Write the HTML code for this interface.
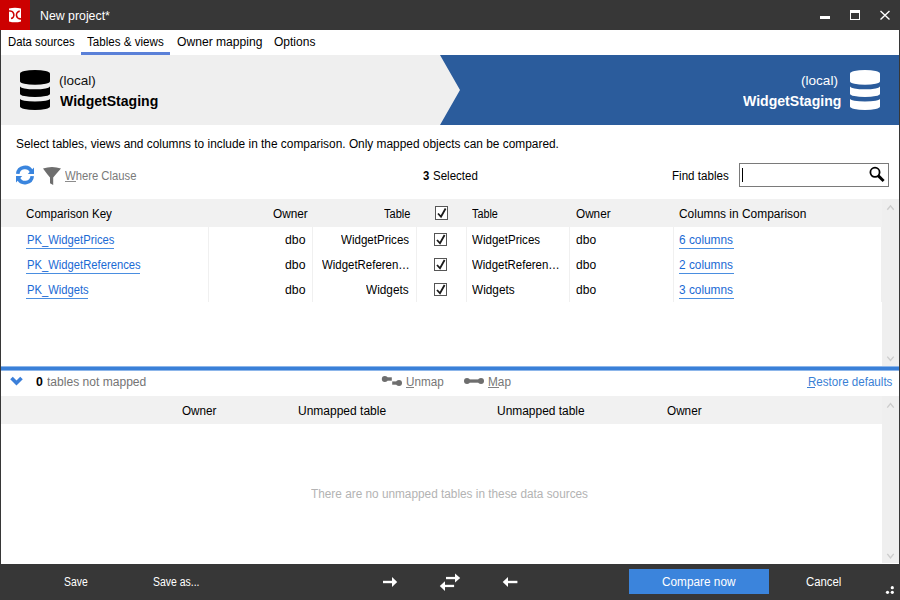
<!DOCTYPE html>
<html><head><meta charset="utf-8"><title>New project*</title>
<style>
html,body{margin:0;padding:0;}
body{width:900px;height:600px;overflow:hidden;position:relative;background:#fff;font-family:"Liberation Sans",sans-serif;}
.a{position:absolute;}
.t{position:absolute;white-space:nowrap;transform-origin:0 0;font-family:"Liberation Sans",sans-serif;}
svg{position:absolute;left:0;top:0;}
</style></head>
<body>
<!-- title bar -->
<div class="a" style="left:0;top:0;width:900px;height:30px;background:#373737"></div>
<div class="a" style="left:0;top:0;width:30px;height:30px;background:#cc0000"></div>
<!-- window borders -->
<div class="a" style="left:0;top:30px;width:1px;height:534px;background:#373737"></div>
<div class="a" style="left:899px;top:30px;width:1px;height:534px;background:#373737"></div>
<!-- tab underline -->
<div class="a" style="left:81px;top:52px;width:89px;height:3px;background:#5a80d8"></div>
<!-- banner -->
<div class="a" style="left:1px;top:55px;width:898px;height:70px;background:#efefef"></div>
<!-- grid header -->
<div class="a" style="left:1px;top:199px;width:898px;height:28px;background:#f1f1f1"></div>
<div class="a" style="left:882px;top:199px;width:17px;height:28px;background:#efefef"></div>
<div class="a" style="left:881px;top:227px;width:18px;height:75px;background:#efefef"></div>
<div class="a" style="left:882px;top:302px;width:17px;height:64px;background:#efefef"></div>
<!-- column separators -->
<div class="a" style="left:208px;top:227px;width:1px;height:75px;background:#f0f0f0"></div>
<div class="a" style="left:312px;top:227px;width:1px;height:75px;background:#f0f0f0"></div>
<div class="a" style="left:416px;top:227px;width:1px;height:75px;background:#f0f0f0"></div>
<div class="a" style="left:466px;top:227px;width:1px;height:75px;background:#f0f0f0"></div>
<div class="a" style="left:569px;top:227px;width:1px;height:75px;background:#f0f0f0"></div>
<div class="a" style="left:673px;top:227px;width:1px;height:75px;background:#f0f0f0"></div>
<!-- link underlines -->
<div class="a" style="left:26px;top:248px;width:88px;height:1px;background:#4a8ee0"></div>
<div class="a" style="left:26px;top:273px;width:114px;height:1px;background:#4a8ee0"></div>
<div class="a" style="left:26px;top:298px;width:62px;height:1px;background:#4a8ee0"></div>
<div class="a" style="left:679px;top:248px;width:55px;height:1px;background:#4a8ee0"></div>
<div class="a" style="left:679px;top:273px;width:55px;height:1px;background:#4a8ee0"></div>
<div class="a" style="left:679px;top:298px;width:55px;height:1px;background:#4a8ee0"></div>
<!-- blue divider -->
<div class="a" style="left:1px;top:366px;width:898px;height:5px;background:linear-gradient(#8db6ea 0 1px,#3a80d8 1px 4px,#8db6ea 4px 5px)"></div>
<!-- bottom grid header -->
<div class="a" style="left:1px;top:396px;width:898px;height:28px;background:#f1f1f1"></div>
<div class="a" style="left:882px;top:396px;width:17px;height:167px;background:#efefef"></div>
<!-- underlines of mnemonic -->
<div class="a" style="left:65px;top:181px;width:11px;height:1px;background:#8c8c8c"></div>
<div class="a" style="left:406px;top:387px;width:8px;height:1px;background:#808080"></div>
<div class="a" style="left:488px;top:387px;width:11px;height:1px;background:#808080"></div>
<div class="a" style="left:807px;top:387px;width:8px;height:1px;background:#3a7fd5"></div>
<!-- search box -->
<div class="a" style="left:739px;top:163px;width:148px;height:22px;border:1px solid #7a7a7a;background:#fff"></div>
<div class="a" style="left:742px;top:168px;width:1px;height:14px;background:#000"></div>
<!-- bottom bar -->
<div class="a" style="left:0;top:564px;width:900px;height:36px;background:#373737"></div>
<div class="a" style="left:629px;top:569px;width:140px;height:25px;background:#3b84dc"></div>

<svg width="900" height="600" viewBox="0 0 900 600">
  <!-- logo -->
  <path d="M9 8.5 Q15 6.8 21 8.5 L21 21.5 Q15 23.2 9 21.5 Z" fill="#fff"/>
  <path d="M9 11.1 A3.8 3.8 0 0 1 11 18.6" fill="none" stroke="#cc0000" stroke-width="1.6"/>
  <path d="M19.7 11.1 A3.8 3.8 0 0 0 21 18.8" fill="none" stroke="#cc0000" stroke-width="1.6"/>
  <!-- window controls -->
  <rect x="820" y="16" width="10" height="3" fill="#fff"/>
  <rect x="850.5" y="10.5" width="9" height="9" fill="none" stroke="#fff" stroke-width="1"/>
  <rect x="850" y="10" width="10" height="3" fill="#fff"/>
  <path d="M880.5 11 L889.5 19.5 M889.5 11 L880.5 19.5" stroke="#fff" stroke-width="1.4"/>
  <!-- banner arrow -->
  <path d="M440 55 L899 55 L899 125 L440 125 L460 90 Z" fill="#2b5c9c"/>
  <!-- left db icon -->
  <g transform="translate(20,70)" fill="#000">
    <path d="M0 3.5 A15 3.5 0 0 1 30 3.5 L30 11.25 A15 3.6 0 0 1 0 11.25 Z"/>
    <path d="M0 16.3 A15 3 0 0 0 30 16.3 L30 23.7 A15 3.4 0 0 1 0 23.7 Z"/>
    <path d="M0 28.8 A15 2.6 0 0 0 30 28.8 L30 36.6 A15 3.4 0 0 1 0 36.6 Z"/>
  </g>
  <!-- right db icon -->
  <g transform="translate(850,70)" fill="#fff">
    <path d="M0 3.5 A15 3.5 0 0 1 30 3.5 L30 11.25 A15 3.6 0 0 1 0 11.25 Z"/>
    <path d="M0 16.3 A15 3 0 0 0 30 16.3 L30 23.7 A15 3.4 0 0 1 0 23.7 Z"/>
    <path d="M0 28.8 A15 2.6 0 0 0 30 28.8 L30 36.6 A15 3.4 0 0 1 0 36.6 Z"/>
  </g>
  <!-- refresh icon -->
  <g transform="translate(16,166)" fill="#3a85de">
    <path d="M1.75 7.9 A7.25 7.25 0 0 1 15.5 5.5" fill="none" stroke="#3a85de" stroke-width="3.6"/>
    <path d="M18 1.5 L18 7.9 L11.8 7.9 Z"/>
    <path d="M16.25 10.1 A7.25 7.25 0 0 1 2.5 12.5" fill="none" stroke="#3a85de" stroke-width="3.6"/>
    <path d="M0 16.5 L0 10.1 L6.2 10.1 Z"/>
  </g>
  <!-- funnel -->
  <path d="M43 168.5 Q52 165.4 61 168.5 Q56 174 53.2 177.6 L53.2 185 L50 183.2 L50 177.6 Q47 174 43 168.5 Z" fill="#6e6e6e"/>
  <!-- search magnifier -->
  <circle cx="875" cy="172.3" r="4.6" fill="none" stroke="#000" stroke-width="1.8"/>
  <path d="M878.2 175.6 L883.6 181" stroke="#000" stroke-width="2.9"/>
  <!-- checkboxes -->
  <g fill="#fff" stroke="#555" stroke-width="1">
    <rect x="435.5" y="206.5" width="12" height="13"/>
    <rect x="434.5" y="233.5" width="12" height="12"/>
    <rect x="434.5" y="258.5" width="12" height="12"/>
    <rect x="434.5" y="283.5" width="12" height="12"/>
  </g>
  <g fill="none" stroke="#1a1a1a" stroke-width="1.8" stroke-linejoin="miter">
    <path d="M438 213.5 L441 216.8 L445.6 208.5"/>
    <path d="M437 240 L440 243.3 L444.6 235"/>
    <path d="M437 265 L440 268.3 L444.6 260"/>
    <path d="M437 290 L440 293.3 L444.6 285"/>
  </g>
  <!-- scrollbar chevrons -->
  <g fill="none" stroke="#cdcdcd" stroke-width="1.4">
    <path d="M887.3 209.8 L890.5 205.8 L893.7 209.8"/>
    <path d="M887.3 356.6 L890.5 360.4 L893.7 356.6"/>
    <path d="M887.3 407.6 L890.5 403.6 L893.7 407.6"/>
    <path d="M887.3 553.9 L890.5 557.9 L893.7 553.9"/>
  </g>
  <!-- collapse chevron -->
  <path d="M11.5 378 L16.5 383 L21.5 378" fill="none" stroke="#3b7fd9" stroke-width="3.6"/>
  <!-- unmap icon -->
  <g fill="#6e6e6e">
    <circle cx="384.8" cy="379" r="3"/>
    <rect x="384.8" y="377.3" width="7" height="3.4"/>
    <circle cx="399" cy="383" r="3"/>
    <rect x="392.2" y="381.4" width="6.8" height="3.3"/>
  </g>
  <!-- map icon -->
  <g fill="#6e6e6e">
    <circle cx="467" cy="381" r="3"/>
    <circle cx="481" cy="381" r="3"/>
    <rect x="467" y="379.4" width="14" height="3.3"/>
  </g>
  <!-- arrows -->
  <g fill="#fff">
    <rect x="383" y="580.8" width="9.5" height="2.4"/>
    <path d="M392 577 L397.2 582 L392 587 Z"/>
    <rect x="446" y="576.9" width="9.5" height="2.3"/>
    <path d="M455 573.4 L460.2 578 L455 582.5 Z"/>
    <rect x="444.5" y="584.8" width="9.6" height="2.3"/>
    <path d="M445 581.3 L439.8 586 L445 590.9 Z"/>
    <rect x="507.5" y="580.8" width="9.9" height="2.4"/>
    <path d="M508 577 L502.7 582 L508 587 Z"/>
    <circle cx="892.3" cy="587.7" r="1.6"/>
    <circle cx="887.5" cy="592.3" r="1.6"/>
    <circle cx="892.3" cy="592.3" r="1.6"/>
  </g>
</svg>
<span class="t" style="left:39.51px;top:10.00px;font-size:12.5px;line-height:12.5px;font-weight:normal;color:#ffffff;transform:scaleX(0.9858);">New project*</span>
<span class="t" style="left:7.80px;top:36.00px;font-size:12px;line-height:12px;font-weight:normal;color:#000;transform:scaleX(0.9434);">Data sources</span>
<span class="t" style="left:87.30px;top:36.00px;font-size:12px;line-height:12px;font-weight:normal;color:#000;transform:scaleX(0.9664);">Tables &amp; views</span>
<span class="t" style="left:176.80px;top:36.00px;font-size:12px;line-height:12px;font-weight:normal;color:#000;transform:scaleX(1.0091);">Owner mapping</span>
<span class="t" style="left:274.00px;top:36.00px;font-size:12px;line-height:12px;font-weight:normal;color:#000;transform:scaleX(1.0011);">Options</span>
<span class="t" style="left:59.30px;top:74.00px;font-size:13.5px;line-height:13.5px;font-weight:normal;color:#111;transform:scaleX(1.0011);">(local)</span>
<span class="t" style="left:59.60px;top:94.00px;font-size:14px;line-height:14px;font-weight:bold;color:#000;transform:scaleX(1.0040);">WidgetStaging</span>
<span class="t" style="left:800.80px;top:74.00px;font-size:13.5px;line-height:13.5px;font-weight:normal;color:#fff;transform:scaleX(1.0039);">(local)</span>
<span class="t" style="left:742.80px;top:94.00px;font-size:14px;line-height:14px;font-weight:bold;color:#fff;transform:scaleX(1.0050);">WidgetStaging</span>
<span class="t" style="left:16.40px;top:138.00px;font-size:12px;line-height:12px;font-weight:normal;color:#000;transform:scaleX(0.9902);">Select tables, views and columns to include in the comparison. Only mapped objects can be compared.</span>
<span class="t" style="left:65.20px;top:170.00px;font-size:12px;line-height:12px;font-weight:normal;color:#7a7a7a;transform:scaleX(0.9403);">Where Clause</span>
<span class="t" style="left:422.80px;top:170.00px;font-size:12px;line-height:12px;font-weight:bold;color:#000;transform:scaleX(0.9429);">3</span>
<span class="t" style="left:433.00px;top:170.00px;font-size:12px;line-height:12px;font-weight:normal;color:#000;transform:scaleX(0.9603);">Selected</span>
<span class="t" style="left:672.10px;top:170.00px;font-size:12px;line-height:12px;font-weight:normal;color:#000;transform:scaleX(0.9659);">Find tables</span>
<span class="t" style="left:26.10px;top:208.00px;font-size:12px;line-height:12px;font-weight:normal;color:#000;transform:scaleX(0.9684);">Comparison Key</span>
<span class="t" style="left:272.80px;top:208.00px;font-size:12px;line-height:12px;font-weight:normal;color:#000;transform:scaleX(0.9845);">Owner</span>
<span class="t" style="left:384.40px;top:208.00px;font-size:12px;line-height:12px;font-weight:normal;color:#000;transform:scaleX(0.9203);">Table</span>
<span class="t" style="left:472.10px;top:208.00px;font-size:12px;line-height:12px;font-weight:normal;color:#000;transform:scaleX(0.8996);">Table</span>
<span class="t" style="left:575.60px;top:208.00px;font-size:12px;line-height:12px;font-weight:normal;color:#000;transform:scaleX(0.9788);">Owner</span>
<span class="t" style="left:679.20px;top:208.00px;font-size:12px;line-height:12px;font-weight:normal;color:#000;transform:scaleX(0.9939);">Columns in Comparison</span>
<span class="t" style="left:26.50px;top:234.00px;font-size:12px;line-height:12px;font-weight:normal;color:#1a6ad4;transform:scaleX(0.9361);">PK_WidgetPrices</span>
<span class="t" style="left:284.50px;top:234.00px;font-size:12px;line-height:12px;font-weight:normal;color:#000;transform:scaleX(1.0222);">dbo</span>
<span class="t" style="left:340.90px;top:234.00px;font-size:12px;line-height:12px;font-weight:normal;color:#000;transform:scaleX(0.9634);">WidgetPrices</span>
<span class="t" style="left:472.00px;top:234.00px;font-size:12px;line-height:12px;font-weight:normal;color:#000;transform:scaleX(0.9634);">WidgetPrices</span>
<span class="t" style="left:575.60px;top:234.00px;font-size:12px;line-height:12px;font-weight:normal;color:#000;transform:scaleX(1.0026);">dbo</span>
<span class="t" style="left:679.20px;top:234.00px;font-size:12px;line-height:12px;font-weight:normal;color:#1a6ad4;transform:scaleX(0.9874);">6 columns</span>
<span class="t" style="left:26.50px;top:259.00px;font-size:12px;line-height:12px;font-weight:normal;color:#1a6ad4;transform:scaleX(0.9366);">PK_WidgetReferences</span>
<span class="t" style="left:284.50px;top:259.00px;font-size:12px;line-height:12px;font-weight:normal;color:#000;transform:scaleX(1.0222);">dbo</span>
<span class="t" style="left:322.20px;top:259.00px;font-size:12px;line-height:12px;font-weight:normal;color:#000;transform:scaleX(0.9534);">WidgetReferen…</span>
<span class="t" style="left:472.00px;top:259.00px;font-size:12px;line-height:12px;font-weight:normal;color:#000;transform:scaleX(0.9534);">WidgetReferen…</span>
<span class="t" style="left:575.60px;top:259.00px;font-size:12px;line-height:12px;font-weight:normal;color:#000;transform:scaleX(1.0026);">dbo</span>
<span class="t" style="left:679.20px;top:259.00px;font-size:12px;line-height:12px;font-weight:normal;color:#1a6ad4;transform:scaleX(0.9874);">2 columns</span>
<span class="t" style="left:26.50px;top:284.00px;font-size:12px;line-height:12px;font-weight:normal;color:#1a6ad4;transform:scaleX(0.9344);">PK_Widgets</span>
<span class="t" style="left:284.50px;top:284.00px;font-size:12px;line-height:12px;font-weight:normal;color:#000;transform:scaleX(1.0222);">dbo</span>
<span class="t" style="left:366.30px;top:284.00px;font-size:12px;line-height:12px;font-weight:normal;color:#000;transform:scaleX(0.9851);">Widgets</span>
<span class="t" style="left:472.00px;top:284.00px;font-size:12px;line-height:12px;font-weight:normal;color:#000;transform:scaleX(0.9851);">Widgets</span>
<span class="t" style="left:575.60px;top:284.00px;font-size:12px;line-height:12px;font-weight:normal;color:#000;transform:scaleX(1.0026);">dbo</span>
<span class="t" style="left:679.20px;top:284.00px;font-size:12px;line-height:12px;font-weight:normal;color:#1a6ad4;transform:scaleX(0.9874);">3 columns</span>
<span class="t" style="left:35.80px;top:376.00px;font-size:12px;line-height:12px;font-weight:bold;color:#000;transform:scaleX(1.0286);">0</span>
<span class="t" style="left:47.00px;top:376.00px;font-size:12px;line-height:12px;font-weight:normal;color:#747474;transform:scaleX(1.0055);">tables not mapped</span>
<span class="t" style="left:406.00px;top:376.00px;font-size:12px;line-height:12px;font-weight:normal;color:#767676;transform:scaleX(0.9741);">Unmap</span>
<span class="t" style="left:488.00px;top:376.00px;font-size:12px;line-height:12px;font-weight:normal;color:#767676;transform:scaleX(0.9844);">Map</span>
<span class="t" style="left:807.60px;top:376.00px;font-size:12px;line-height:12px;font-weight:normal;color:#3a7fd5;transform:scaleX(0.9659);">Restore defaults</span>
<span class="t" style="left:181.50px;top:405.00px;font-size:12px;line-height:12px;font-weight:normal;color:#000;transform:scaleX(0.9760);">Owner</span>
<span class="t" style="left:298.30px;top:405.00px;font-size:12px;line-height:12px;font-weight:normal;color:#000;transform:scaleX(1.0002);">Unmapped table</span>
<span class="t" style="left:496.50px;top:405.00px;font-size:12px;line-height:12px;font-weight:normal;color:#000;transform:scaleX(0.9956);">Unmapped table</span>
<span class="t" style="left:666.70px;top:405.00px;font-size:12px;line-height:12px;font-weight:normal;color:#000;transform:scaleX(0.9788);">Owner</span>
<span class="t" style="left:311.40px;top:488.00px;font-size:12px;line-height:12px;font-weight:normal;color:#b3b3b3;transform:scaleX(0.9840);">There are no unmapped tables in these data sources</span>
<span class="t" style="left:63.90px;top:576.00px;font-size:12px;line-height:12px;font-weight:normal;color:#fff;transform:scaleX(0.8671);">Save</span>
<span class="t" style="left:152.80px;top:576.00px;font-size:12px;line-height:12px;font-weight:normal;color:#fff;transform:scaleX(0.8712);">Save as...</span>
<span class="t" style="left:662.00px;top:576.00px;font-size:12px;line-height:12px;font-weight:normal;color:#fff;transform:scaleX(0.9835);">Compare now</span>
<span class="t" style="left:806.30px;top:576.00px;font-size:12px;line-height:12px;font-weight:normal;color:#fff;transform:scaleX(0.9458);">Cancel</span>
</body></html>
